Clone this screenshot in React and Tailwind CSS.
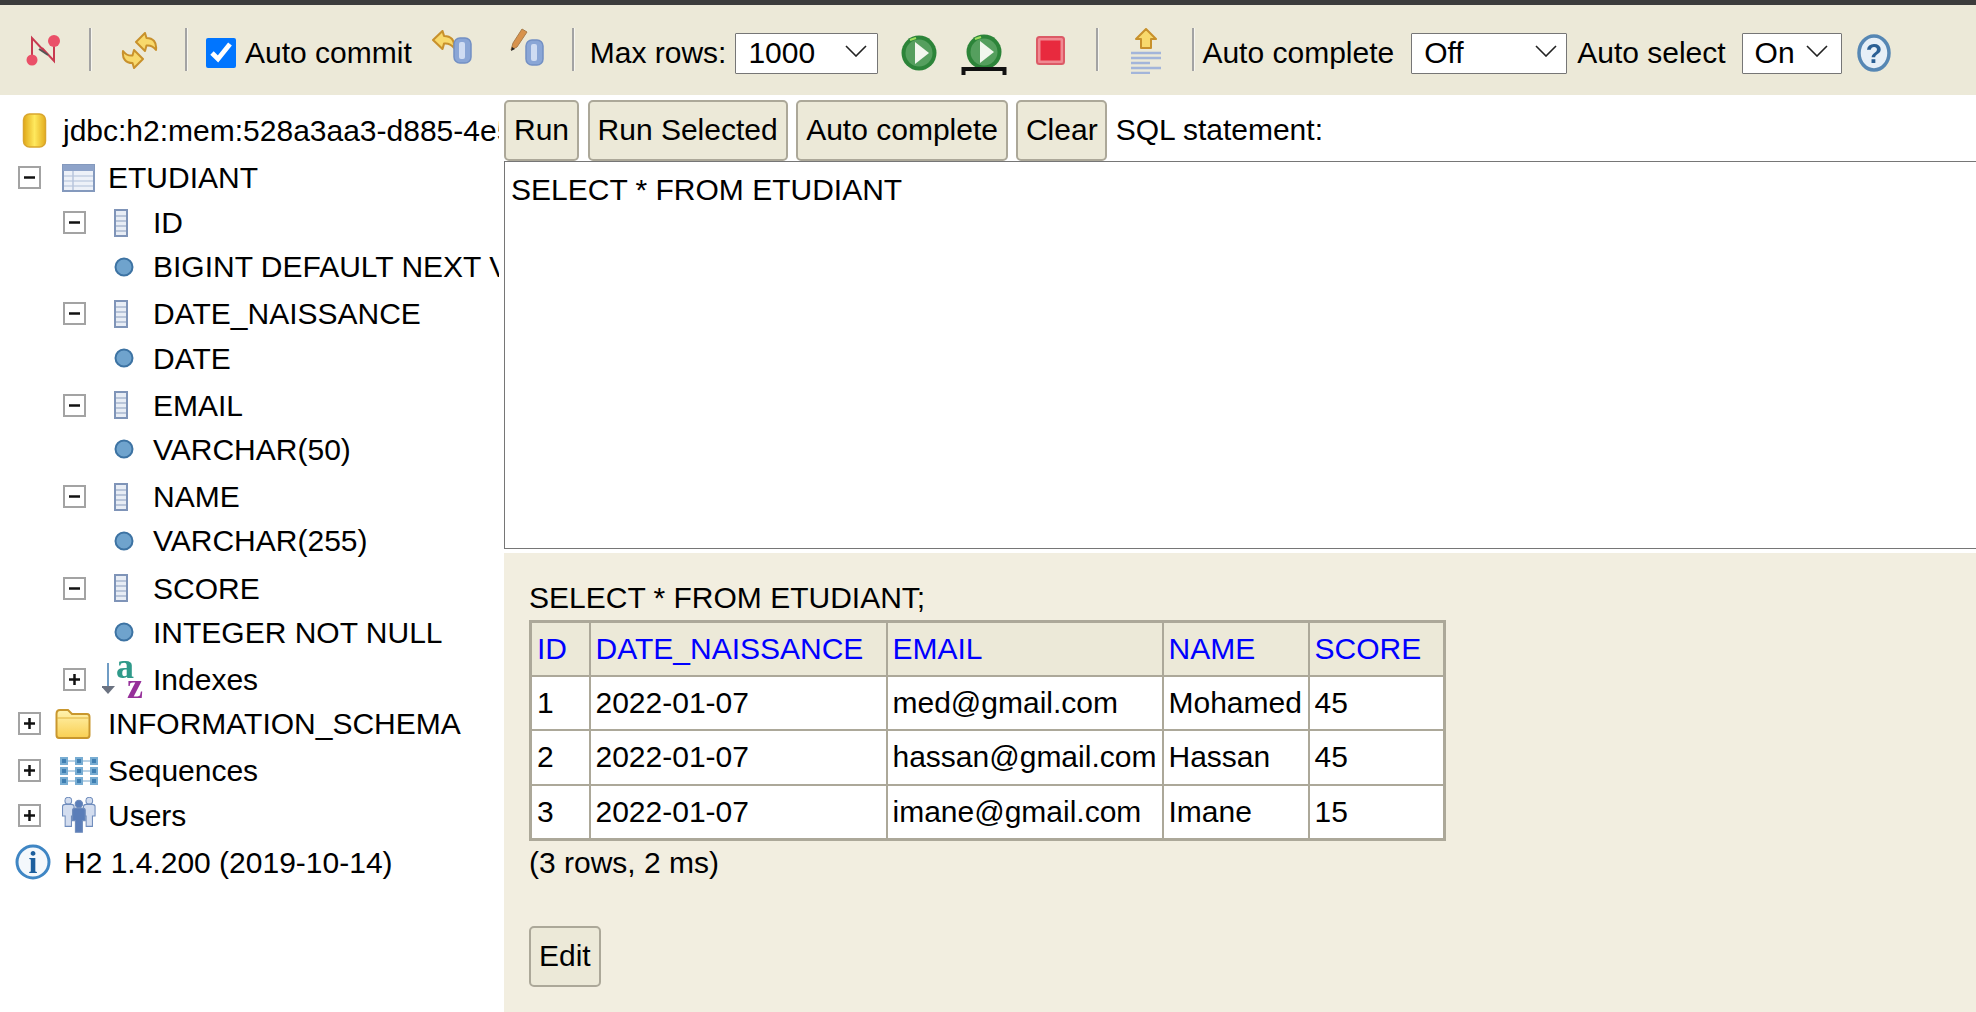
import React from 'react';

const FONT = "font-['Liberation_Sans',Arial,sans-serif]";

// undo-style arrow shared by the refresh and rollback icons
const ARROW = 'M1 10 L10 1 L11.5 6 C18 6 22 10 21 18 C18 14 15 13 11.5 13.5 L10 19 Z';

const Separator = ({ className }) => (
  <div className={`w-[3px] h-[43px] -mt-[7px] bg-[#a3a3a3] border-r border-[#f7f6ef] shrink-0 ${className}`} />
);

const DisconnectIcon = ({ className }) => (
  <svg className={`w-[36px] h-[40px] shrink-0 blur-[0.5px] ${className}`} viewBox="0 0 36 40">
    <path d="M7 24 V5 L20 19" fill="none" stroke="#c83a50" strokeWidth="2" />
    <path d="M29 10 V28 L17 15" fill="none" stroke="#c83a50" strokeWidth="2" />
    <path d="M14 16 L23 22" stroke="#555" strokeWidth="2" />
    <circle cx="7" cy="27" r="5.5" fill="#ea5068" />
    <circle cx="29" cy="8" r="6" fill="#ea5068" />
  </svg>
);

const RefreshIcon = ({ className }) => (
  <svg className={`w-[37px] h-[42px] shrink-0 blur-[0.4px] ${className}`} viewBox="0 0 37 42">
    <g fill="#f8d96c" stroke="#c8912c" strokeWidth="2" strokeLinejoin="round">
      <path d={ARROW} transform="translate(14 3)" />
      <path d={ARROW} transform="translate(23 40) rotate(180)" />
    </g>
  </svg>
);

const MiniCylinder = ({ x, y }) => (
  <g transform={`translate(${x} ${y})`}>
    <rect x="0" y="0" width="17" height="25" rx="6" fill="#8aa6d6" stroke="#7390c4" strokeWidth="1.5" />
    <rect x="5" y="4" width="6" height="17" rx="2" fill="#cfdcf2" />
  </g>
);

const RollbackIcon = ({ className }) => (
  <svg className={`w-[42px] h-[40px] shrink-0 blur-[0.4px] ${className}`} viewBox="0 0 42 40">
    <path d={ARROW} transform="translate(2 4) scale(1.05 1)" fill="#f8d96c" stroke="#c8912c" strokeWidth="2" strokeLinejoin="round" />
    <MiniCylinder x="24" y="12" />
  </svg>
);

const CommitIcon = ({ className }) => (
  <svg className={`w-[34px] h-[40px] shrink-0 blur-[0.4px] ${className}`} viewBox="0 0 34 40">
    <path d="M1 24 L3 17 L12 3 L17 6 L7 21 Z" fill="#d8924c" stroke="#a87c4a" strokeWidth="1" />
    <path d="M1 25 L2 21 L5 23 Z" fill="#222" />
    <MiniCylinder x="16" y="14" />
  </svg>
);

const PlayCircle = ({ cx, cy }) => (
  <g>
    <circle cx={cx} cy={cy} r="17.5" fill="#2c8439" />
    <circle cx={cx} cy={cy} r="13.5" fill="#559f5e" />
    <path d={`M${cx - 4} ${cy - 11} L${cx + 10} ${cy} L${cx - 4} ${cy + 11} Z`} fill="#f2f7ee" />
    <path d={`M${cx - 9} ${cy - 13} L${cx - 3} ${cy - 15}`} stroke="#9ee060" strokeWidth="2" />
  </g>
);

const RunIcon = ({ className }) => (
  <svg className={`w-[36px] h-[36px] shrink-0 blur-[0.4px] ${className}`} viewBox="0 0 36 36">
    <PlayCircle cx={18} cy={18} />
  </svg>
);

const RunSelectedIcon = ({ className }) => (
  <svg className={`w-[46px] h-[42px] mt-[5px] shrink-0 blur-[0.4px] ${className}`} viewBox="0 0 46 42">
    <PlayCircle cx={23} cy={18} />
    <path d="M2.5 41 V35 H43.5 V41" fill="none" stroke="#111" strokeWidth="4" />
  </svg>
);

const StopIcon = ({ className }) => (
  <svg className={`w-[29px] h-[29px] -mt-[5px] shrink-0 blur-[0.5px] ${className}`} viewBox="0 0 29 29">
    <rect x="1" y="1" width="27" height="27" rx="2.5" fill="#f08a92" stroke="#dc5a66" strokeWidth="2" />
    <rect x="4.5" y="4.5" width="20" height="20" fill="#e82a3e" />
  </svg>
);

const HistoryIcon = ({ className }) => (
  <svg className={`w-[32px] h-[46px] -mt-[4px] shrink-0 blur-[0.4px] ${className}`} viewBox="0 0 32 46">
    <path d="M16 1 L26 11 H21 V20 H11 V11 H6 Z" fill="#f8d96c" stroke="#c8912c" strokeWidth="2" strokeLinejoin="round" />
    <g stroke="#a3b5da" strokeWidth="2.5">
      <path d="M1 25 H31" />
      <path d="M1 30 H31" />
      <path d="M1 35 H20" />
      <path d="M1 40 H31" />
      <path d="M1 45 H20" />
    </g>
  </svg>
);

const HelpIcon = ({ className }) => (
  <svg className={`w-[36px] h-[38px] shrink-0 blur-[0.3px] ${className}`} viewBox="0 0 36 38">
    <ellipse cx="18" cy="19" rx="15" ry="17" fill="#e6eff7" stroke="#5687b4" strokeWidth="3.5" />
    <text x="18" y="29" textAnchor="middle" fontSize="27" fontWeight="700" fontFamily="Liberation Sans" fill="#2a5f94">?</text>
  </svg>
);

const DatabaseIcon = ({ className }) => (
  <svg className={`w-[25px] h-[35px] shrink-0 blur-[0.4px] ${className}`} viewBox="0 0 25 35">
    <defs>
      <linearGradient id="dbYellow" x1="0" x2="1" y1="0" y2="0">
        <stop offset="0" stopColor="#e0a818" />
        <stop offset="0.5" stopColor="#ffe95e" />
        <stop offset="1" stopColor="#e3ad1e" />
      </linearGradient>
    </defs>
    <rect x="1.5" y="1" width="22" height="33" rx="6" fill="url(#dbYellow)" stroke="#d9a62e" strokeWidth="1.5" />
  </svg>
);

const TableIcon = ({ className }) => (
  <svg className={`w-[33px] h-[28px] shrink-0 blur-[0.3px] ${className}`} viewBox="0 0 33 28">
    <rect x="1" y="1" width="31" height="26" fill="#edf1f8" stroke="#8499bd" strokeWidth="2" />
    <rect x="1" y="1" width="31" height="6" fill="#8ea3c9" />
    <path d="M2 12 H31 M2 17 H31 M2 22 H31" stroke="#c3cfe2" strokeWidth="1.5" />
    <path d="M11 7 V26" stroke="#b7c5dc" strokeWidth="1.5" />
  </svg>
);

const ColumnIcon = ({ className }) => (
  <svg className={`w-[14px] h-[28px] shrink-0 blur-[0.3px] ${className}`} viewBox="0 0 14 28">
    <rect x="1" y="1" width="12" height="26" fill="#e8edf5" stroke="#7f94b8" strokeWidth="2" />
    <path d="M2 7 H12 M2 12 H12 M2 17 H12 M2 22 H12" stroke="#a9b8d0" strokeWidth="1.5" />
  </svg>
);

const TypeIcon = ({ className }) => (
  <svg className={`w-[20px] h-[20px] shrink-0 blur-[0.3px] ${className}`} viewBox="0 0 20 20">
    <circle cx="10" cy="10" r="8.5" fill="#6fa3cd" stroke="#3d73a3" strokeWidth="2" />
  </svg>
);

const IndexIcon = ({ className }) => (
  <svg className={`w-[42px] h-[39px] shrink-0 blur-[0.3px] ${className}`} viewBox="0 0 42 39">
    <path d="M6 3 V27" stroke="#6f9cc4" strokeWidth="2" />
    <path d="M-1 26 H13 L6 34 Z" fill="#6b7280" />
    <text x="14" y="18" fontSize="36" fontWeight="700" fontFamily="Liberation Serif" fill="#2f9a8a">a</text>
    <text x="25" y="38" fontSize="36" fontWeight="700" fontFamily="Liberation Serif" fill="#96309a">z</text>
  </svg>
);

const FolderIcon = ({ className }) => (
  <svg className={`w-[36px] h-[32px] shrink-0 blur-[0.4px] ${className}`} viewBox="0 0 36 32">
    <defs>
      <linearGradient id="folderYellow" x1="0" x2="0" y1="0" y2="1">
        <stop offset="0" stopColor="#fff3b0" />
        <stop offset="1" stopColor="#f9cf52" />
      </linearGradient>
    </defs>
    <path d="M1.5 6 Q1.5 2 5 2 H13 L17 6 H32 Q34.5 6 34.5 9 V27 Q34.5 30 32 30 H4 Q1.5 30 1.5 27 Z" fill="url(#folderYellow)" stroke="#c9972e" strokeWidth="2" />
    <path d="M2 10 H34" stroke="#e0b23e" strokeWidth="1" />
  </svg>
);

const SequenceIcon = ({ className }) => (
  <svg className={`w-[38px] h-[28px] shrink-0 blur-[0.4px] ${className}`} viewBox="0 0 38 28">
    {[0, 10, 20].map((y) => (
      <g key={y}>
        <path d={`M4 ${y + 4} H34`} stroke="#a3c4de" strokeWidth="1.5" />
        {[0, 15, 30].map((x) => (
          <g key={x}>
            <rect x={x} y={y} width="8" height="8" fill="#78add3" />
            <rect x={x + 2} y={y + 2} width="4" height="4" fill="#3f7fb2" />
          </g>
        ))}
      </g>
    ))}
  </svg>
);

const Person = ({ x, y, color, scale = 1 }) => (
  <g transform={`translate(${x} ${y}) scale(${scale})`} fill={color} stroke="#6f8cbc" strokeWidth="1">
    <circle cx="6" cy="3.5" r="3.2" />
    <path d="M0.5 9 Q0.5 7 3 7 H9 Q11.5 7 11.5 9 V18 H9 V28 H3 V18 H0.5 Z" />
  </g>
);

const UsersIcon = ({ className }) => (
  <svg className={`w-[34px] h-[36px] shrink-0 blur-[0.4px] ${className}`} viewBox="0 0 34 36">
    <Person x="0" y="0" color="#d3ddef" scale={1.05} />
    <Person x="21" y="0" color="#d3ddef" scale={1.05} />
    <Person x="10" y="3" color="#5a7db8" scale={1.15} />
  </svg>
);

const InfoIcon = ({ className }) => (
  <svg className={`w-[38px] h-[36px] shrink-0 blur-[0.3px] ${className}`} viewBox="0 0 38 36">
    <circle cx="19" cy="18" r="16" fill="#f4f8fc" stroke="#3f86c4" strokeWidth="3" />
    <text x="19" y="29" textAnchor="middle" fontSize="32" fontWeight="700" fontFamily="Liberation Serif" fill="#1c5f9e">i</text>
  </svg>
);

const Expander = ({ open }) => (
  <svg className="w-[23px] h-[23px] shrink-0 blur-[0.3px]" viewBox="0 0 23 23">
    <rect x="1" y="1" width="21" height="21" fill="#fff" stroke="#a3a3a3" strokeWidth="2" />
    <path d="M6 11.5 H17" stroke="#111" strokeWidth="2.5" />
    {!open && <path d="M11.5 6 V17" stroke="#111" strokeWidth="2.5" />}
  </svg>
);

// one row of the tree, cut in 45px wide cells like the table in the original page
const TreeRow = ({ level = 0, expander, icon, label, tall }) => (
  <div className={`flex items-center pl-[18px] shrink-0 whitespace-nowrap ${tall ? 'h-[46.4px] pb-[3px]' : 'h-[45px]'}`}>
    {level > 0 && <div className={level === 1 ? 'w-[45px] shrink-0' : 'w-[90px] shrink-0'} />}
    {level < 2 && (
      <div className="w-[45px] shrink-0">{expander && <Expander open={expander === 'open'} />}</div>
    )}
    <div className="w-[45px] shrink-0 flex items-center">{icon}</div>
    <span>{label}</span>
  </div>
);

const Select = ({ value, options, className, chevron }) => (
  <div className={`relative h-[41px] -mt-[4px] shrink-0 ${className}`}>
    <select
      defaultValue={value}
      className="appearance-none w-full h-full bg-white border border-[#767676] rounded-[1px] pl-[12px] text-[30px] leading-none"
    >
      {options.map((o) => (
        <option key={o}>{o}</option>
      ))}
    </select>
    <svg className={`absolute top-[15px] w-[22px] h-[12px] pointer-events-none ${chevron}`} viewBox="0 0 22 12">
      <path d="M1 1 L11 11 L21 1" fill="none" stroke="#222" strokeWidth="1.6" />
    </svg>
  </div>
);

const Button = ({ children, className = 'px-[8px]' }) => (
  <button className={`h-[61px] pb-[2px] bg-[#ece9d8] border-2 border-[#aca899] rounded-[5px] shrink-0 text-black text-[30px] ${className}`}>
    {children}
  </button>
);

const Toolbar = () => (
  <div className="flex items-center h-[90px] pt-[5px] pl-[25px] bg-[#ece9d8] whitespace-nowrap shrink-0">
    <DisconnectIcon />
    <Separator className="ml-[28px]" />
    <RefreshIcon className="ml-[29px] -mt-[6px]" />
    <Separator className="ml-[27px]" />
    <input type="checkbox" defaultChecked className="ml-[18px] w-[30px] h-[30px] accent-[#0075ff] shrink-0" />
    <span className="ml-[9px]">Auto commit</span>
    <RollbackIcon className="ml-[18px] -mt-[13px]" />
    <CommitIcon className="ml-[38px] -mt-[13px]" />
    <Separator className="ml-[28px]" />
    <span className="ml-[15px]">Max rows:</span>
    <Select className="ml-[9px] w-[143px]" chevron="right-[11px]" value="1000" options={['10', '100', '1000', '10000']} />
    <RunIcon className="ml-[23px]" />
    <RunSelectedIcon className="ml-[24px]" />
    <StopIcon className="ml-[29px]" />
    <Separator className="ml-[31px]" />
    <HistoryIcon className="ml-[31px]" />
    <Separator className="ml-[30px]" />
    <span className="ml-[7px]">Auto complete</span>
    <Select className="ml-[17px] w-[156px]" chevron="right-[10px]" value="Off" options={['Off', 'Normal', 'Full']} />
    <span className="ml-[10px]">Auto select</span>
    <Select className="ml-[16px] w-[100px]" chevron="right-[14px]" value="On" options={['On', 'Off']} />
    <HelpIcon className="ml-[14px]" />
  </div>
);

const Tree = () => (
  <aside className="w-[499px] mr-[5px] shrink-0 overflow-hidden bg-white">
    <div className="flex items-center h-[60px] pt-[10px] pl-[22px] whitespace-nowrap">
      <DatabaseIcon />
      <span className="ml-[16px]">jdbc:h2:mem:528a3aa3-d885-4e5f-a1c2-7b19d04e</span>
    </div>
    <TreeRow expander="open" icon={<TableIcon className="-ml-px" />} label="ETUDIANT" />
    <TreeRow level={1} expander="open" icon={<ColumnIcon className="ml-[6px]" />} label="ID" />
    <TreeRow level={2} icon={<TypeIcon className="ml-[6px]" />} label="BIGINT DEFAULT NEXT VALUE FOR" tall />
    <TreeRow level={1} expander="open" icon={<ColumnIcon className="ml-[6px]" />} label="DATE_NAISSANCE" />
    <TreeRow level={2} icon={<TypeIcon className="ml-[6px]" />} label="DATE" tall />
    <TreeRow level={1} expander="open" icon={<ColumnIcon className="ml-[6px]" />} label="EMAIL" />
    <TreeRow level={2} icon={<TypeIcon className="ml-[6px]" />} label="VARCHAR(50)" tall />
    <TreeRow level={1} expander="open" icon={<ColumnIcon className="ml-[6px]" />} label="NAME" />
    <TreeRow level={2} icon={<TypeIcon className="ml-[6px]" />} label="VARCHAR(255)" tall />
    <TreeRow level={1} expander="open" icon={<ColumnIcon className="ml-[6px]" />} label="SCORE" />
    <TreeRow level={2} icon={<TypeIcon className="ml-[6px]" />} label="INTEGER NOT NULL" tall />
    <TreeRow level={1} expander="closed" icon={<IndexIcon className="-ml-[6px]" />} label="Indexes" />
    <TreeRow expander="closed" icon={<FolderIcon className="-ml-[8px]" />} label="INFORMATION_SCHEMA" tall />
    <TreeRow expander="closed" icon={<SequenceIcon className="-ml-[3px]" />} label="Sequences" />
    <TreeRow expander="closed" icon={<UsersIcon className="-ml-px" />} label="Users" tall />
    <div className="flex items-center h-[45px] pl-[14px] whitespace-nowrap">
      <InfoIcon />
      <span className="ml-[12px]">H2 1.4.200 (2019-10-14)</span>
    </div>
  </aside>
);

const rows = [
  ['1', '2022-01-07', 'med@gmail.com', 'Mohamed', '45'],
  ['2', '2022-01-07', 'hassan@gmail.com', 'Hassan', '45'],
  ['3', '2022-01-07', 'imane@gmail.com', 'Imane', '15'],
];
const columns = ['ID', 'DATE_NAISSANCE', 'EMAIL', 'NAME', 'SCORE'];

const ResultTable = () => (
  <table className="table-fixed w-[914px] mt-[2px] border-collapse border-[3px] border-[#aca899]">
    <colgroup>
      <col className="w-[59px]" />
      <col className="w-[297px]" />
      <col className="w-[276px]" />
      <col className="w-[146px]" />
      <col className="w-[136px]" />
    </colgroup>
    <thead>
      <tr className="h-[54px] bg-[#ece9d8]">
        {columns.map((c) => (
          <th key={c} className="border-2 border-[#aca899] pl-[5px] text-left font-normal text-[#0000ff]">{c}</th>
        ))}
      </tr>
    </thead>
    <tbody>
      {rows.map((row) => (
        <tr key={row[0]} className="h-[54.5px] bg-white">
          {row.map((cell, i) => (
            <td key={i} className="border-2 border-[#aca899] pl-[5px] pb-[1px] whitespace-nowrap">{cell}</td>
          ))}
        </tr>
      ))}
    </tbody>
  </table>
);

const App = () => {
  return (
    <div className={`w-[1976px] h-[1012px] flex flex-col overflow-hidden bg-white text-black text-[30px] ${FONT}`}>
      <div className="h-[5px] bg-[#3c3c3c] shrink-0" />
      <Toolbar />
      <div className="flex flex-1 min-h-0">
        <Tree />
        <main className="flex-1 min-w-0 flex flex-col">
          <div className="flex items-center gap-[8.5px] h-[66px] pt-[5px] shrink-0 whitespace-nowrap">
            <Button>Run</Button>
            <Button>Run Selected</Button>
            <Button>Auto complete</Button>
            <Button className="px-[7.5px]">Clear</Button>
            <span className="pb-[2px]">SQL statement:</span>
          </div>
          <textarea
            readOnly
            defaultValue="SELECT * FROM ETUDIANT"
            className="h-[388px] w-full shrink-0 resize-none border border-r-0 border-[#767676] px-[6px] pt-[8px] leading-[40px] outline-none"
          />
          <div className="flex-1 mt-[4px] pl-[25px] pt-[25px] bg-[#f2eee0]">
            <div className="leading-[40px]">SELECT * FROM ETUDIANT;</div>
            <ResultTable />
            <div className="mt-[5px] leading-[34px]">(3 rows, 2 ms)</div>
            <Button className="mt-[46px] px-[8px]">Edit</Button>
          </div>
        </main>
      </div>
    </div>
  );
};

export default App;
